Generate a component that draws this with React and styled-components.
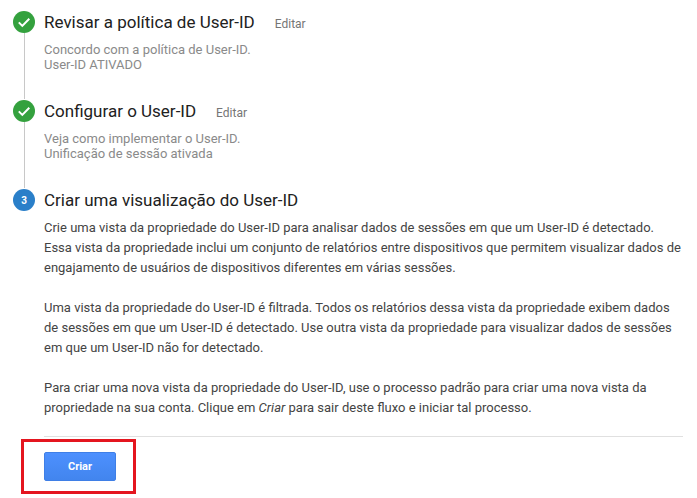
import styled, { createGlobalStyle } from "styled-components";

const GlobalStyle = createGlobalStyle`
  html, body {
    margin: 0;
    padding: 0;
    background: #ffffff;
  }
  body {
    font-family: "Roboto", "Liberation Sans", sans-serif;
  }
`;

const CheckIcon = () => (
  <svg width="22" height="22" viewBox="0 0 22 22">
    <circle cx="11" cy="11" r="11" fill="#34a13e" />
    <path d="M5.8 11.4l3.5 3.5 7-7.2" fill="none" stroke="#fff" strokeWidth="2" />
  </svg>
);

const Step = ({ done, number, title, editable, last, children }) => (
  <StepRow $last={last}>
    <Rail>
      {done ? <CheckIcon /> : <NumberBadge>{number}</NumberBadge>}
      {!last && <Connector />}
    </Rail>
    <StepBody>
      <TitleRow>
        <StepTitle>{title}</StepTitle>
        {editable && <EditLink>Editar</EditLink>}
      </TitleRow>
      {children}
    </StepBody>
  </StepRow>
);

export default function App() {
  return (
    <Page>
      <GlobalStyle />
      <Step done title="Revisar a política de User-ID" editable>
        <Summary>
          Concordo com a política de User-ID.
          <br />
          User-ID ATIVADO
        </Summary>
      </Step>
      <Step done title="Configurar o User-ID" editable>
        <Summary>
          Veja como implementar o User-ID.
          <br />
          Unificação de sessão ativada
        </Summary>
      </Step>
      <Step number="3" title="Criar uma visualização do User-ID" last>
        <Paragraph>
          Crie uma vista da propriedade do User-ID para analisar dados de sessões em que um User-ID é detectado.
          <br />
          Essa vista da propriedade inclui um conjunto de relatórios entre dispositivos que permitem visualizar dados de
          <br />
          engajamento de usuários de dispositivos diferentes em várias sessões.
        </Paragraph>
        <Paragraph>
          Uma vista da propriedade do User-ID é filtrada. Todos os relatórios dessa vista da propriedade exibem dados
          <br />
          de sessões em que um User-ID é detectado. Use outra vista da propriedade para visualizar dados de sessões
          <br />
          em que um User-ID não for detectado.
        </Paragraph>
        <Paragraph>
          Para criar uma nova vista da propriedade do User-ID, use o processo padrão para criar uma nova vista da
          <br />
          propriedade na sua conta. Clique em <em>Criar</em> para sair deste fluxo e iniciar tal processo.
        </Paragraph>
      </Step>
      <Footer>
        <Highlight />
        <PrimaryButton>Criar</PrimaryButton>
      </Footer>
    </Page>
  );
}

const Page = styled.div`
  width: 697px;
  height: 498px;
  box-sizing: border-box;
  padding-top: 11px;
  overflow: hidden;
  background: #ffffff;
`;

const StepRow = styled.div`
  display: flex;
  height: ${(p) => (p.$last ? "auto" : "89px")};
  padding-left: 13px;
`;

const Rail = styled.div`
  display: flex;
  flex-direction: column;
  align-items: center;
  flex: 0 0 22px;
  margin-right: 9px;
`;

const Connector = styled.div`
  flex: 1;
  width: 1px;
  margin-bottom: 1px;
  background: #c8c8c8;
`;

const NumberBadge = styled.div`
  display: flex;
  align-items: center;
  justify-content: center;
  width: 22px;
  height: 22px;
  border-radius: 50%;
  background: #2a7fc9;
  color: #ffffff;
  font-size: 10px;
  font-weight: 700;
`;

const StepBody = styled.div`
  flex: 1;
  min-width: 0;
`;

const TitleRow = styled.div`
  display: flex;
  align-items: baseline;
  height: 22px;
  line-height: 23px;
`;

const StepTitle = styled.div`
  font-size: 17px;
  color: #212121;
`;

const EditLink = styled.a`
  margin-left: 20px;
  font-size: 12px;
  color: #757575;
`;

const Summary = styled.div`
  margin-top: 9px;
  font-size: 13px;
  line-height: 15px;
  color: #8a8a8a;
`;

const Paragraph = styled.p`
  margin: 7px 14px 0 0;
  font-size: 13px;
  line-height: 20px;
  color: #444444;
  white-space: nowrap;

  & + & {
    margin-top: 20px;
  }
`;

const Footer = styled.div`
  position: relative;
  margin: 18px 14px 0 44px;
  padding-top: 15px;
  border-top: 1px solid #e0e0e0;
`;

const Highlight = styled.div`
  position: absolute;
  left: -23px;
  top: 2px;
  width: 109px;
  height: 49px;
  border: 3px solid #e4151f;
  pointer-events: none;
`;

const PrimaryButton = styled.button`
  display: block;
  width: 72px;
  height: 29px;
  padding: 0;
  border: 1px solid #3f7fe6;
  border-radius: 2px;
  background: linear-gradient(#4d90fe, #4285ee);
  color: #ffffff;
  font-family: inherit;
  font-size: 11px;
  font-weight: 700;
`;
